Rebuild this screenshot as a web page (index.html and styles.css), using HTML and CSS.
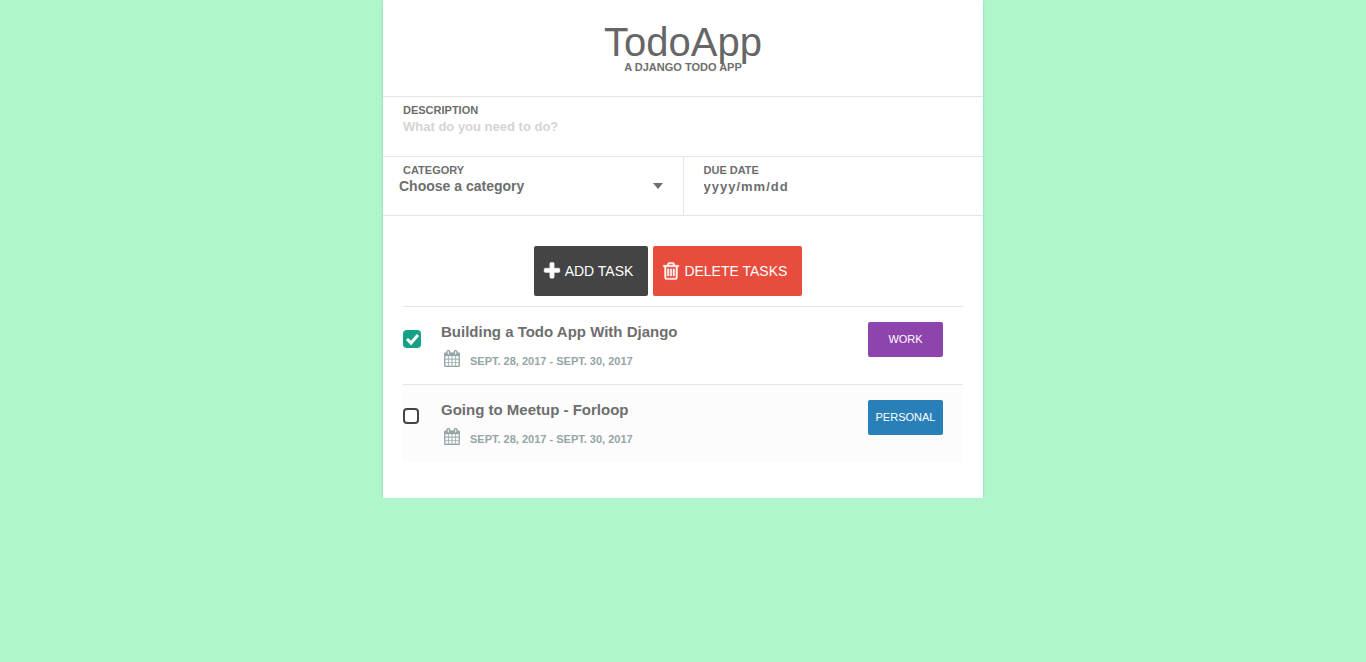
FILE: index.html
```
<!DOCTYPE html>
<html lang="en">
<head>
<meta charset="utf-8">
<meta name="viewport" content="width=device-width, initial-scale=1.0">
<title>TodoApp - Django Project</title>
<link rel="stylesheet" href="styles.css">
</head>
<body>
<svg class="sprite" aria-hidden="true">
  <symbol id="calendar" viewBox="64 0 1664 1792">
    <path d="M192 1664h288v-288h-288v288zm352 0h320v-288h-320v288zm-352-352h288v-320h-288v320zm352 0h320v-320h-320v320zm-352-384h288v-288h-288v288zm736 736h320v-288h-320v288zm-384-736h320v-288h-320v288zm768 736h288v-288h-288v288zm-384-352h320v-320h-320v320zm-352-864v-288q0-13-9.500-22.500t-22.500-9.500h-64q-13 0-22.500 9.500t-9.500 22.500v288q0 13 9.500 22.500t22.500 9.500h64q13 0 22.500-9.500t9.500-22.500zm736 864h288v-320h-288v320zm-384-384h320v-288h-320v288zm384 0h288v-288h-288v288zm32-480v-288q0-13-9.500-22.500t-22.500-9.500h-64q-13 0-22.500 9.500t-9.500 22.500v288q0 13 9.500 22.500t22.500 9.500h64q13 0 22.500-9.500t9.500-22.500zm384-64v1280q0 52-38 90t-90 38h-1408q-52 0-90-38t-38-90v-1280q0-52 38-90t90-38h128v-96q0-66 47-113t113-47h64q66 0 113 47t47 113v96h384v-96q0-66 47-113t113-47h64q66 0 113 47t47 113v96h128q52 0 90 38t38 90z"/>
  </symbol>
</svg>

<div class="container">
  <form class="todo-form">
    <header class="header">
      <h1>TodoApp</h1>
      <p class="subtitle">A Django Todo App</p>
    </header>

    <div class="field">
      <label for="description">Description</label>
      <input type="text" id="description" name="description" placeholder="What do you need to do?">
    </div>

    <div class="field-row">
      <div class="field">
        <label for="category">Category</label>
        <select id="category" name="category">
          <option>Choose a category</option>
          <option>Work</option>
          <option>Personal</option>
        </select>
      </div>
      <div class="field">
        <label for="dueDate">Due Date</label>
        <input type="text" id="dueDate" name="due_date" class="date" placeholder="yyyy/mm/dd">
      </div>
    </div>

    <div class="tasks">
      <div class="actions">
        <button type="submit" class="btn btn-add" name="taskAdd">
          <svg class="btn-icon" viewBox="0 0 1792 1792" aria-hidden="true"><path d="M1600 736v192q0 40-28 68t-68 28h-416v416q0 40-28 68t-68 28h-192q-40 0-68-28t-28-68v-416h-416q-40 0-68-28t-28-68v-192q0-40 28-68t68-28h416v-416q0-40 28-68t68-28h192q40 0 68 28t28 68v416h416q40 0 68 28t28 68z"/></svg>
          Add Task
        </button>
        <button type="submit" class="btn btn-delete" name="taskDelete">
          <svg class="btn-icon" viewBox="0 0 1792 1792" aria-hidden="true"><path d="M704 736v576q0 14-9 23t-23 9h-64q-14 0-23-9t-9-23v-576q0-14 9-23t23-9h64q14 0 23 9t9 23zm256 0v576q0 14-9 23t-23 9h-64q-14 0-23-9t-9-23v-576q0-14 9-23t23-9h64q14 0 23 9t9 23zm256 0v576q0 14-9 23t-23 9h-64q-14 0-23-9t-9-23v-576q0-14 9-23t23-9h64q14 0 23 9t9 23zm128 724v-948h-896v948q0 22 7 40.500t14.500 27 10.500 8.500h832q3 0 10.500-8.500t14.500-27 7-40.500zm-672-1076h448l-48-117q-7-9-17-11h-317q-10 2-17 11zm928 32v64q0 14-9 23t-23 9h-96v948q0 83-47 143.500t-113 60.500h-832q-66 0-113-58.500t-47-141.500v-952h-96q-14 0-23-9t-9-23v-64q0-14 9-23t23-9h309l70-167q15-37 54-63t79-26h320q40 0 79 26t54 63l70 167h309q14 0 23 9t9 23z"/></svg>
          Delete Tasks
        </button>
      </div>

      <ul class="task-list">
        <li class="task">
          <input type="checkbox" id="task1" class="check" checked>
          <div class="task-info">
            <label for="task1">Building a Todo App With Django</label>
            <p class="task-date"><svg class="cal-icon" aria-hidden="true"><use href="#calendar"/></svg>Sept. 28, 2017 - Sept. 30, 2017</p>
          </div>
          <span class="badge work">Work</span>
        </li>
        <li class="task">
          <input type="checkbox" id="task2" class="check">
          <div class="task-info">
            <label for="task2">Going to Meetup - Forloop</label>
            <p class="task-date"><svg class="cal-icon" aria-hidden="true"><use href="#calendar"/></svg>Sept. 28, 2017 - Sept. 30, 2017</p>
          </div>
          <span class="badge personal">Personal</span>
        </li>
      </ul>
    </div>
  </form>
</div>
</body>
</html>
```
FILE: styles.css
```
* { box-sizing: border-box; }
body {
  margin: 0;
  background: #b1f6cb;
  color: #6e6e6e;
  font-family: "Liberation Sans", Arial, sans-serif;
}
.sprite { display: none; }
.container {
  max-width: 600px;
  margin: 0 auto;
  background: #fff;
  box-shadow: 0 1px 2px rgba(0,0,0,0.2);
}
.header {
  padding: 24px 20px 22px;
  text-align: center;
}
h1 {
  margin: 0;
  color: #666;
  font-size: 40px;
  font-weight: normal;
  line-height: 36px;
}
.subtitle, .field label {
  margin: 0;
  font-size: 11px;
  font-weight: bold;
  line-height: 14px;
  text-transform: uppercase;
}
.field {
  display: flex;
  flex-direction: column;
  flex: 1;
  height: 60px;
  padding-top: 6px;
  border-top: 1px solid #e4e4e4;
}
.field label { padding: 0 20px; }
.field input, .field select {
  width: 100%;
  height: 18px;
  padding: 0 20px;
  border: 0;
  outline: 0;
  background: none;
  color: #6e6e6e;
  font-family: inherit;
  font-size: 13px;
  font-weight: bold;
}
.field input::placeholder { color: #d4d4d4; }
.field .date { letter-spacing: 1px; }
.field .date::placeholder { color: #6e6e6e; }
.field select {
  appearance: none;
  padding: 0 16px;
  background: url("data:image/svg+xml,%3Csvg xmlns='http://www.w3.org/2000/svg' width='10' height='6'%3E%3Cpath d='M0 0h10L5 6z' fill='%236e6e6e'/%3E%3C/svg%3E") no-repeat right 20px center;
  font-size: 14px;
}
.field-row {
  display: flex;
  border-bottom: 1px solid #e4e4e4;
}
.field-row .field { height: 59px; }
.field-row .field + .field { border-left: 1px solid #e4e4e4; }
.tasks { padding: 30px 20px 36px; }
.actions {
  display: flex;
  justify-content: center;
  gap: 5px;
  margin-right: 30px;
  margin-bottom: 10px;
}
.btn {
  display: flex;
  align-items: center;
  gap: 3px;
  height: 50px;
  padding: 0 15px 0 8px;
  border: 0;
  border-radius: 2px;
  color: #fff;
  font-family: inherit;
  font-size: 14px;
  text-transform: uppercase;
  cursor: pointer;
}
.btn-add { background: #444; }
.btn-delete { background: #e84c3d; }
.btn-icon {
  width: 20px;
  height: 20px;
  fill: currentColor;
  stroke: currentColor;
  stroke-width: 40;
}
.task-list {
  margin: 0;
  padding: 0;
  list-style: none;
}
.task {
  display: flex;
  align-items: flex-start;
  height: 78px;
  padding: 15px 20px 0 0;
  border-top: 1px solid #e4e4e4;
}
.task:nth-child(even) { background: #fcfcfc; }
.check {
  appearance: none;
  width: 16px;
  height: 16px;
  margin: 8px 22px 0 0;
  border: 2px solid #444;
  border-radius: 4px;
  background: #fff;
}
.check:checked {
  width: 18px;
  height: 18px;
  margin-right: 20px;
  border: 0;
  background: #16a086 url("data:image/svg+xml,%3Csvg xmlns='http://www.w3.org/2000/svg' width='18' height='18'%3E%3Cpath d='M4 9l4 4 7-8' fill='none' stroke='white' stroke-width='3'/%3E%3C/svg%3E") center no-repeat;
}
.task-info { flex: 1; }
.task-info label {
  display: block;
  font-size: 15px;
  font-weight: bold;
  line-height: 20px;
}
.task-date {
  display: flex;
  align-items: flex-end;
  gap: 10px;
  margin: 8px 0 0 3px;
  color: #95a5a6;
  font-size: 11px;
  font-weight: bold;
  line-height: 12px;
  text-transform: uppercase;
}
.cal-icon {
  width: 16px;
  height: 17px;
  fill: currentColor;
  stroke: currentColor;
  stroke-width: 20;
}
.badge {
  width: 75px;
  border-radius: 2px;
  color: #fff;
  font-size: 11px;
  line-height: 35px;
  text-align: center;
  text-transform: uppercase;
}
.work { background: #8e44ad; }
.personal { background: #2980b9; }
```
